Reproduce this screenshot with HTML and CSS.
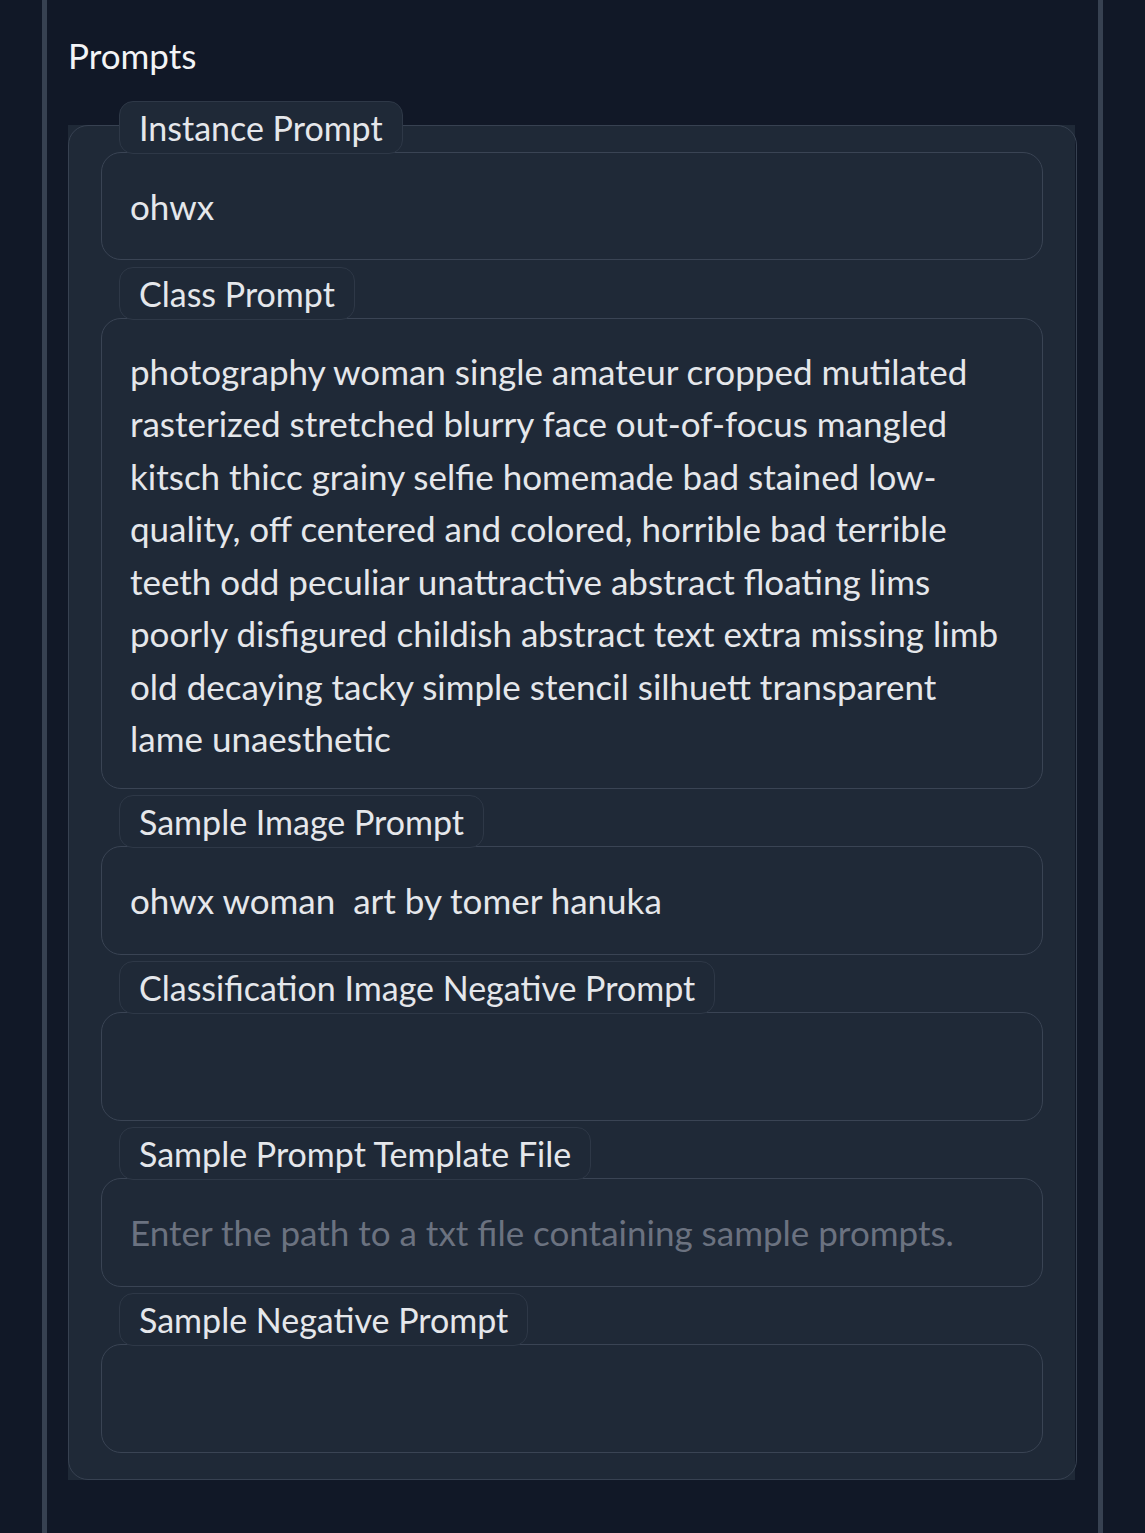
FILE: index.html
```html
<!DOCTYPE html>
<html lang="en">

<head>
    <meta charset="UTF-8">
    <meta name="viewport" content="width=device-width, initial-scale=1.0">
    <title>Prompts</title>
    <link rel="stylesheet" href="styles.css">
</head>

<body>

    <div class="coluna">
        <div class="titulo">Prompts</div>

        <div class="grupo-fundo">
            <div class="grupo">

                <div class="campo">
                    <span class="rotulo">Instance Prompt</span>
                    <div class="caixa">ohwx</div>
                </div>

                <div class="campo">
                    <span class="rotulo">Class Prompt</span>
                    <div class="caixa caixa-longa">
                        <span class="linha">photography woman single amateur cropped mutilated</span>
                        <span class="linha">rasterized stretched blurry face out-of-focus mangled</span>
                        <span class="linha">kitsch thicc grainy selfie homemade bad stained low-</span>
                        <span class="linha">quality, off centered and colored, horrible bad terrible</span>
                        <span class="linha">teeth odd peculiar unattractive abstract floating lims</span>
                        <span class="linha">poorly disfigured childish abstract text extra missing limb</span>
                        <span class="linha">old decaying tacky simple stencil silhuett transparent</span>
                        <span class="linha">lame unaesthetic</span>
                    </div>
                </div>

                <div class="campo">
                    <span class="rotulo">Sample Image Prompt</span>
                    <div class="caixa">ohwx woman  art by tomer hanuka</div>
                </div>

                <div class="campo">
                    <span class="rotulo">Classification Image Negative Prompt</span>
                    <div class="caixa"></div>
                </div>

                <div class="campo">
                    <span class="rotulo">Sample Prompt Template File</span>
                    <div class="caixa placeholder">Enter the path to a txt file containing sample prompts.</div>
                </div>

                <div class="campo">
                    <span class="rotulo">Sample Negative Prompt</span>
                    <div class="caixa"></div>
                </div>

            </div>
        </div>
    </div>

</body>

</html>
```

FILE: styles.css
```css
body{
    margin: 0;
    background-color: #111827;
    font-family: Lato, "Noto Sans", sans-serif;
    font-size: 35px;
    color: #e5e7eb;
}

.coluna{
    width: 1009px;
    min-height: 1600px;
    margin-left: 42px;
    border-left: solid #374151 5px;
    border-right: solid #374151 5px;
    padding: 29px 21px 0 21px;
}

.titulo{
    line-height: 52.5px;
    color: #f3f4f6;
}

/* fundo quadrado atras da borda arredondada */
.grupo-fundo{
    margin-top: 43px;
    margin-right: 2px;
    background-color: #1f2937;
}

.grupo{
    margin-right: -2px;
    border: solid #374151 1px;
    border-radius: 20px;
    padding: 0 33px 26px 32px;
    display: flex;
    flex-direction: column;
    gap: 6.5px;
}

.campo{
    display: flex;
    flex-direction: column;
    align-items: flex-start;
}

.campo:first-child{
    margin-top: -25px;
}

.rotulo{
    margin-left: 18px;
    padding: 0 19px;
    line-height: 51px;
    font-size: 34px;
    background-color: #1f2937;
    border: solid #2e3847 1px;
    border-radius: 14px;
    color: #e5e7eb;
    white-space: nowrap;
    position: relative;
    z-index: 1;
}

.caixa{
    align-self: stretch;
    margin-top: -2px;
    min-height: 52.5px;
    padding: 27px 28px 27px 28px;
    line-height: 52.5px;
    font-size: 35px;
    background-color: #1f2937;
    border: solid #3a4454 1px;
    border-radius: 20px;
    white-space: pre;
    color: #e5e7eb;
}

.caixa-longa{
    padding-top: 26px;
    padding-bottom: 23px;
    white-space: normal;
}

.linha{
    display: block;
    white-space: pre;
}

.placeholder{
    color: #6b7280;
}
```
